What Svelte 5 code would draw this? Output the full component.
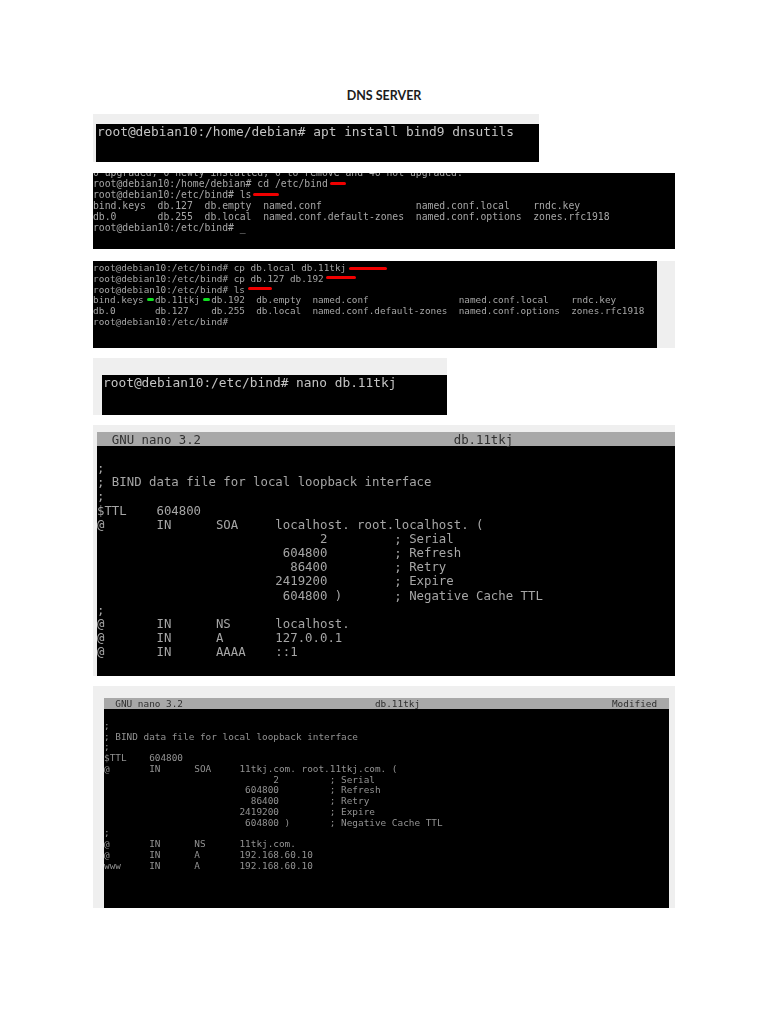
<script>
  const ls2 = [
    "0 upgraded, 0 newly installed, 0 to remove and 46 not upgraded.",
    "root@debian10:/home/debian# cd /etc/bind",
    "root@debian10:/etc/bind# ls",
    "bind.keys  db.127  db.empty  named.conf                named.conf.local    rndc.key",
    "db.0       db.255  db.local  named.conf.default-zones  named.conf.options  zones.rfc1918",
    "root@debian10:/etc/bind# _",
  ];
  const ls3 = [
    "root@debian10:/etc/bind# cp db.local db.11tkj",
    "root@debian10:/etc/bind# cp db.127 db.192",
    "root@debian10:/etc/bind# ls",
    "bind.keys  db.11tkj  db.192  db.empty  named.conf                named.conf.local    rndc.key",
    "db.0       db.127    db.255  db.local  named.conf.default-zones  named.conf.options  zones.rfc1918",
    "root@debian10:/etc/bind#",
  ];
  const zone1 = [
    "",
    ";",
    "; BIND data file for local loopback interface",
    ";",
    "$TTL    604800",
    "@       IN      SOA     localhost. root.localhost. (",
    "                              2         ; Serial",
    "                         604800         ; Refresh",
    "                          86400         ; Retry",
    "                        2419200         ; Expire",
    "                         604800 )       ; Negative Cache TTL",
    ";",
    "@       IN      NS      localhost.",
    "@       IN      A       127.0.0.1",
    "@       IN      AAAA    ::1",
  ];
  const zone2 = [
    "",
    ";",
    "; BIND data file for local loopback interface",
    ";",
    "$TTL    604800",
    "@       IN      SOA     11tkj.com. root.11tkj.com. (",
    "                              2         ; Serial",
    "                         604800         ; Refresh",
    "                          86400         ; Retry",
    "                        2419200         ; Expire",
    "                         604800 )       ; Negative Cache TTL",
    ";",
    "@       IN      NS      11tkj.com.",
    "@       IN      A       192.168.60.10",
    "www     IN      A       192.168.60.10",
  ];
  const marks2 = [
    { x: 237, y: 9, w: 16 },
    { x: 160, y: 20, w: 26 },
  ];
  const marks3 = [
    { x: 256, y: 6, w: 38 },
    { x: 233, y: 15, w: 30 },
    { x: 155, y: 26, w: 24 },
    { x: 54, y: 37, w: 7, green: true },
    { x: 110, y: 37, w: 7, green: true },
  ];
</script>

{#snippet marks(list)}
  {#each list as m}
    <i class={["mark", m.green && "green"]} style="left:{m.x}px;top:{m.y}px;width:{m.w}px"></i>
  {/each}
{/snippet}

<main class="page">
  <h1>DNS SERVER</h1>

  <section class="frame one">
    <div class="term">
      <pre>root@debian10:/home/debian# apt install bind9 dnsutils</pre>
    </div>
  </section>

  <section class="frame two">
    <div class="term">
      <pre>{ls2.join("\n")}</pre>
      {@render marks(marks2)}
    </div>
  </section>

  <section class="frame three">
    <div class="term">
      <pre>{ls3.join("\n")}</pre>
      {@render marks(marks3)}
    </div>
  </section>

  <section class="frame four">
    <div class="term">
      <pre>root@debian10:/etc/bind# nano db.11tkj</pre>
    </div>
  </section>

  <section class="frame five">
    <div class="term">
      <div class="bar"><pre>  GNU nano 3.2                                  db.11tkj</pre></div>
      <pre class="body">{zone1.join("\n")}</pre>
    </div>
  </section>

  <section class="frame six">
    <div class="term">
      <div class="bar"><pre>  GNU nano 3.2                                  db.11tkj                                  Modified</pre></div>
      <pre class="body">{zone2.join("\n")}</pre>
    </div>
  </section>
</main>

<style>
  :global(body) {
    margin: 0;
    background: #fff;
  }

  .page {
    height: 1024px;
    padding: 88px 0 0 93px;
    box-sizing: border-box;
    overflow: hidden;
  }

  h1 {
    width: 582px;
    margin: 0 0 10px;
    font: 700 12.5px/16px Lato, "Open Sans", sans-serif;
    color: #1c1c1c;
    text-align: center;
  }

  pre {
    margin: 0;
    font-family: "DejaVu Sans Mono", "Liberation Mono", monospace;
    color: #a6a6a6;
    white-space: pre;
    filter: blur(0.45px);
  }

  .frame {
    background: #efefef;
    box-sizing: border-box;
    overflow: hidden;
  }

  .term {
    position: relative;
    height: 100%;
    box-sizing: border-box;
    background: #000;
    overflow: hidden;
  }

  .one {
    width: 446px;
    height: 48px;
    padding: 10px 0 0 3px;
  }

  .one pre,
  .four pre {
    font-size: 12.83px;
    line-height: 16px;
    color: #c4c4c4;
  }

  .one .term {
    padding-left: 1px;
  }

  .two {
    width: 582px;
    height: 76px;
    margin-top: 11px;
  }

  .two pre {
    margin-top: -6px;
    font-size: 9.75px;
    line-height: 11px;
  }

  .three {
    width: 582px;
    height: 87px;
    margin-top: 12px;
    padding-right: 18px;
  }

  .three pre {
    margin-top: 2px;
    font-size: 9.35px;
    line-height: 10.8px;
  }

  .four {
    width: 354px;
    height: 57px;
    margin-top: 10px;
    padding: 17px 0 0 9px;
  }

  .four .term {
    padding-left: 1px;
  }

  .five {
    width: 582px;
    height: 251px;
    margin-top: 10px;
    padding: 7px 0 0 4px;
  }

  .five .bar {
    height: 14px;
    background: #a8a8a8;
  }

  .five pre {
    font-size: 12.35px;
    line-height: 14.15px;
  }

  .five .bar pre {
    padding-top: 1px;
    color: #303030;
  }

  .five .body {
    margin-top: 1px;
  }

  .six {
    width: 582px;
    height: 222px;
    margin-top: 10px;
    padding: 12px 6px 0 11px;
  }

  .six .bar {
    height: 11px;
    background: #a8a8a8;
  }

  .six pre {
    font-size: 9.4px;
    line-height: 10.75px;
    color: #929292;
  }

  .six .bar pre {
    padding-top: 1px;
    color: #303030;
  }

  .six .body {
    margin-top: 1px;
  }

  .mark {
    position: absolute;
    height: 2.5px;
    border-radius: 2px;
    background: #f00000;
  }

  .mark.green {
    background: #10e020;
  }
</style>
